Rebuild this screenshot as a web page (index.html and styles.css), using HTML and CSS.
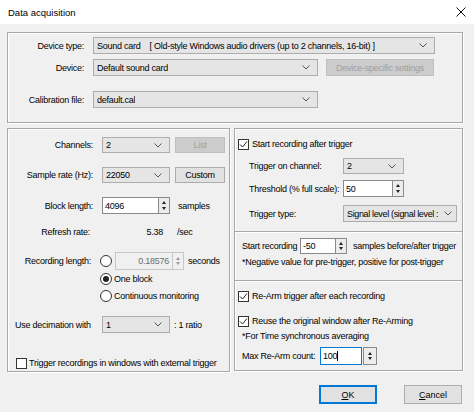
FILE: index.html
```html
<!DOCTYPE html>
<html>
<head>
<meta charset="utf-8">
<link rel="stylesheet" href="styles.css">
</head>
<body>
<div class="titlebar">
  <span class="title">Data acquisition</span>
  <svg class="close" width="10" height="10" viewBox="0 0 10 10"><path d="M0.5 0.5 L9.5 9.5 M9.5 0.5 L0.5 9.5" stroke="#111" stroke-width="1" fill="none"/></svg>
</div>
<div class="dialog">
  <div class="group top">
    <div class="row">
      <span class="lbl">Device type:</span>
      <div class="combo w-type"><span class="ctext">Sound card    [ Old-style Windows audio drivers (up to 2 channels, 16-bit) ]</span><svg class="chev" width="8" height="5" viewBox="0 0 8 5"><polyline points="0.5,0.5 4,4 7.5,0.5" fill="none" stroke="#555" stroke-width="1"/></svg></div>
    </div>
    <div class="row">
      <span class="lbl">Device:</span>
      <div class="combo w-dev"><span class="ctext">Default sound card</span><svg class="chev" width="8" height="5" viewBox="0 0 8 5"><polyline points="0.5,0.5 4,4 7.5,0.5" fill="none" stroke="#555" stroke-width="1"/></svg></div>
      <span class="btn disabled w-dss">Device-specific settings</span>
    </div>
    <div class="row cal">
      <span class="lbl">Calibration file:</span>
      <div class="combo w-dev"><span class="ctext">default.cal</span><svg class="chev" width="8" height="5" viewBox="0 0 8 5"><polyline points="0.5,0.5 4,4 7.5,0.5" fill="none" stroke="#555" stroke-width="1"/></svg></div>
    </div>
  </div>

  <div class="lower">
    <div class="group left">
      <div class="lrow r-chan">
        <span class="llbl">Channels:</span>
        <div class="combo w-small"><span class="ctext">2</span><svg class="chev" width="8" height="5" viewBox="0 0 8 5"><polyline points="0.5,0.5 4,4 7.5,0.5" fill="none" stroke="#555" stroke-width="1"/></svg></div>
        <span class="btn disabled w-list">List</span>
      </div>
      <div class="lrow r-rate">
        <span class="llbl">Sample rate (Hz):</span>
        <div class="combo w-small"><span class="ctext">22050</span><svg class="chev" width="8" height="5" viewBox="0 0 8 5"><polyline points="0.5,0.5 4,4 7.5,0.5" fill="none" stroke="#555" stroke-width="1"/></svg></div>
        <span class="btn w-list">Custom</span>
      </div>
      <div class="lrow r-block">
        <span class="llbl">Block length:</span>
        <div class="spin-wrap"><span class="edit w-block">4096</span><span class="spin"><i class="up"></i><i class="dn"></i></span></div>
        <span class="after-samples">samples</span>
      </div>
      <div class="lrow r-refresh">
        <span class="llbl refresh">Refresh rate:</span>
        <span class="refval">5.38</span>
        <span class="persec">/sec</span>
      </div>
      <div class="lrow r-rec">
        <span class="llbl rec">Recording length:</span>
        <span class="radio"></span>
        <div class="spin-wrap rec-spin"><span class="edit dis w-rec">0.18576</span><span class="spin dis"><i class="up"></i><i class="dn"></i></span></div>
        <span class="after-sec">seconds</span>
      </div>
      <div class="lrow r-one indent">
        <span class="radio on"></span><span class="rtext">One block</span>
      </div>
      <div class="lrow r-cont indent">
        <span class="radio"></span><span class="rtext">Continuous monitoring</span>
      </div>
      <div class="lrow r-dec">
        <span class="declbl">Use decimation with</span>
        <div class="combo w-small"><span class="ctext">1</span><svg class="chev" width="8" height="5" viewBox="0 0 8 5"><polyline points="0.5,0.5 4,4 7.5,0.5" fill="none" stroke="#555" stroke-width="1"/></svg></div>
        <span class="ratio">: 1 ratio</span>
      </div>
      <div class="lrow r-ext">
        <span class="check"></span><span class="ctext2">Trigger recordings in windows with external trigger</span>
      </div>
    </div>

    <div class="group right">
      <div class="sec s1">
        <div class="rrow r-start">
          <span class="check on"><svg width="9" height="9" viewBox="0 0 9 9"><polyline points="1,4.5 3.5,7 8,1.5" fill="none" stroke="#222" stroke-width="1"/></svg></span><span class="ctext2">Start recording after trigger</span>
        </div>
        <div class="rrow r-tch">
          <span class="rlbl">Trigger on channel:</span>
          <div class="combo w-tch"><span class="ctext">2</span><svg class="chev" width="8" height="5" viewBox="0 0 8 5"><polyline points="0.5,0.5 4,4 7.5,0.5" fill="none" stroke="#555" stroke-width="1"/></svg></div>
        </div>
        <div class="rrow r-thr">
          <span class="rlbl">Threshold (% full scale):</span>
          <div class="spin-wrap"><span class="edit w-thr">50</span><span class="spin"><i class="up"></i><i class="dn"></i></span></div>
        </div>
        <div class="rrow r-ttype">
          <span class="rlbl">Trigger type:</span>
          <div class="combo w-ttype"><span class="ctext tt">Signal level (signal level :</span><svg class="chev" width="8" height="5" viewBox="0 0 8 5"><polyline points="0.5,0.5 4,4 7.5,0.5" fill="none" stroke="#555" stroke-width="1"/></svg></div>
        </div>
      </div>
      <div class="sec s2">
        <div class="rrow r-pre">
          <span class="prelbl">Start recording</span>
          <div class="spin-wrap"><span class="edit w-pre">-50</span><span class="spin"><i class="up"></i><i class="dn"></i></span></div>
          <span class="after-pre">samples before/after trigger</span>
        </div>
        <div class="rrow note">*Negative value for pre-trigger, positive for post-trigger</div>
      </div>
      <div class="sec s3">
        <div class="rrow r-rearm">
          <span class="check on"><svg width="9" height="9" viewBox="0 0 9 9"><polyline points="1,4.5 3.5,7 8,1.5" fill="none" stroke="#222" stroke-width="1"/></svg></span><span class="ctext2">Re-Arm trigger after each recording</span>
        </div>
        <div class="rrow r-reuse">
          <span class="check on"><svg width="9" height="9" viewBox="0 0 9 9"><polyline points="1,4.5 3.5,7 8,1.5" fill="none" stroke="#222" stroke-width="1"/></svg></span><span class="ctext2">Reuse the original window after Re-Arming</span>
        </div>
        <div class="rrow note tsa">*For Time synchronous averaging</div>
        <div class="rrow r-max">
          <span class="maxlbl">Max Re-Arm count:</span>
          <div class="spin-wrap"><span class="edit focus w-max">100<span class="caret"></span></span><span class="spin"><i class="up"></i><i class="dn"></i></span></div>
        </div>
      </div>
    </div>
  </div>

  <div class="buttons">
    <span class="btn dlg default"><u>O</u>K</span>
    <span class="btn dlg"><u>C</u>ancel</span>
  </div>
</div>
</body>
</html>
```
FILE: styles.css
```css
* { box-sizing: border-box; }
html, body { margin: 0; padding: 0; }
body {
  width: 474px;
  height: 412px;
  overflow: hidden;
  background: #f0f0f0;
  font-family: "Liberation Sans", Arial, sans-serif;
  font-size: 9px;
  letter-spacing: -0.25px;
  color: #000;
}
.titlebar {
  height: 24px;
  background: #fff;
  display: flex;
  align-items: center;
  justify-content: space-between;
  padding: 0 8px 0 8px;
}
.title {
  font-family: "Liberation Sans", Arial, sans-serif;
  font-size: 9.5px;
  letter-spacing: 0;
  color: #000;
}
.close { display: block; }
.dialog { padding: 8px 11px 0 7px; }

.group {
  border: 1px solid #a8a8a8;
  box-shadow: inset 1px 1px 0 #fff, 1px 1px 0 #fff;
}
.top {
  height: 91px;
  padding-top: 4px;
  display: flex;
  flex-direction: column;
}
.row { display: flex; align-items: center; height: 17px; }
.row + .row { margin-top: 5px; }
.row.cal { margin-top: 15px; }
.lbl { width: 76px; margin-right: 9px; text-align: right; white-space: nowrap; }

.combo {
  height: 100%;
  background: #e5e5e5;
  border: 1px solid #adadad;
  display: flex;
  align-items: center;
  justify-content: space-between;
  padding: 0 7px 0 3px;
  overflow: hidden;
}
.ctext { white-space: pre; overflow: hidden; }
.chev { flex: none; margin-left: 3px; }
.w-type { width: 342px; }
.w-dev { width: 225px; }
.w-small { width: 68px; }
.w-tch { width: 61px; }
.w-ttype { width: 114px; padding-right: 4px; }
.w-ttype .chev { margin-left: 1px; }
.ctext.tt { letter-spacing: -0.35px; }

.btn {
  display: flex;
  align-items: center;
  justify-content: center;
  height: 100%;
  background: #e1e1e1;
  border: 1px solid #adadad;
  white-space: nowrap;
}
.btn.disabled { background: #cccccc; border-color: #bfbfbf; color: #a0a0a0; }
.w-dss { width: 108px; margin-left: 8px; }
.w-list { width: 50px; margin-left: 5px; }

.lower { display: flex; gap: 4px; margin-top: 5px; }
.left {
  width: 223px;
  height: 244px;
  padding-top: 8px;
  display: flex;
  flex-direction: column;
}
.lrow { display: flex; align-items: center; white-space: nowrap; }
.llbl { width: 85px; margin-right: 9px; text-align: right; }
.llbl.refresh { width: 82px; margin-right: 0; }
.llbl.rec { width: 83px; }
.r-chan { height: 16px; }
.r-rate { height: 16px; margin-top: 14px; }
.r-block { height: 17px; margin-top: 14px; }
.r-refresh { height: 16px; margin-top: 10px; }
.r-rec { height: 18px; margin-top: 12px; }
.r-one { height: 14px; margin-top: 2px; }
.r-cont { height: 14px; margin-top: 3px; }
.r-dec { height: 17px; margin-top: 13px; }
.r-ext { height: 14px; margin-top: 23px; padding-left: 8px; }
.indent { padding-left: 92px; }

.spin-wrap { display: flex; height: 100%; }
.edit {
  height: 100%;
  background: #fff;
  border: 1px solid #8a8a8a;
  border-right: none;
  display: flex;
  align-items: center;
  padding-left: 2px;
}
.edit.dis { background: #f0f0f0; border-color: #c8c8c8; color: #6d6d6d; justify-content: flex-end; padding-right: 3px; }
.edit.focus { border-color: #0078d7; border-right: 1px solid #0078d7; }
.caret { display: inline-block; width: 1px; height: 10px; background: #000; margin-left: 0; }
.spin {
  width: 12px;
  height: 100%;
  background: #ececec;
  border: 1px solid #8a8a8a;
  display: flex;
  flex-direction: column;
  align-items: center;
  justify-content: space-evenly;
  padding: 1px;
}
.spin.dis { border-color: #c8c8c8; background: #f0f0f0; }
.spin i { display: block; width: 0; height: 0; border-left: 2.5px solid transparent; border-right: 2.5px solid transparent; }
.spin .up { border-bottom: 3px solid #222; }
.spin .dn { border-top: 3px solid #222; }
.spin.dis .up { border-bottom-color: #9a9a9a; }
.spin.dis .dn { border-top-color: #9a9a9a; }
.w-block { width: 56px; }
.after-samples { margin-left: 8px; }
.refval { width: 73px; text-align: right; }
.persec { margin-left: 14px; }
.rec-spin { margin-left: 3px; }
.w-rec { width: 57px; }
.after-sec { margin-left: 4px; }

.radio {
  width: 12px;
  height: 12px;
  border: 1px solid #333;
  border-radius: 50%;
  background: #fff;
  flex: none;
  display: flex;
  align-items: center;
  justify-content: center;
}
.radio.on::after { content: ""; width: 6px; height: 6px; border-radius: 50%; background: #222; }
.rtext { margin-left: 2px; }
.declbl { width: 78px; margin-left: 7px; margin-right: 9px; }
.ratio { margin-left: 4px; }

.check {
  width: 11px;
  height: 11px;
  border: 1px solid #333;
  background: #fff;
  flex: none;
  display: flex;
  align-items: center;
  justify-content: center;
}
.check svg { display: block; }
.ctext2 { margin-left: 2px; }

.right {
  width: 229px;
  height: 243px;
  display: flex;
  flex-direction: column;
}
.sec { display: flex; flex-direction: column; }
.s1 { height: 102px; padding-top: 8px; }
.s2, .s3 {
  border-top: 1px solid #a8a8a8;
  box-shadow: inset 0 1px 0 #fff;
}
.s2 { height: 49px; padding-top: 6px; }
.s3 { flex: 1; padding-top: 8px; }
.rrow { display: flex; align-items: center; white-space: nowrap; }
.r-start { height: 14px; padding-left: 3px; }
.r-start .ctext2 { margin-left: 3px; }
.rlbl { width: 94px; margin-left: 14px; }
.r-tch { height: 16px; margin-top: 7px; }
.r-thr { height: 17px; margin-top: 6px; }
.w-thr { width: 49px; }
.r-ttype { height: 17px; margin-top: 8px; }
.r-pre { height: 16px; padding-left: 7px; }
.prelbl { width: 58px; }
.w-pre { width: 35px; }
.after-pre { margin-left: 6px; }
.note { height: 12px; margin-top: 2px; padding-left: 7px; }
.r-rearm { height: 14px; padding-left: 3px; }
.r-reuse { height: 14px; margin-top: 11px; padding-left: 3px; }
.r-rearm .ctext2, .r-reuse .ctext2 { margin-left: 3px; }
.r-max { height: 18px; margin-top: 5px; padding-left: 7px; }
.maxlbl { width: 78px; }
.w-max { width: 42px; }
.r-max .spin { width: 14px; margin-left: 1px; }

.buttons {
  display: flex;
  justify-content: flex-end;
  gap: 27px;
  margin-top: 13px;
  padding-right: 1px;
}
.btn.dlg { width: 58px; height: 19px; letter-spacing: 0; }
.btn.default { border-color: #0078d7; box-shadow: inset 0 0 0 1px #0078d7; }
```
